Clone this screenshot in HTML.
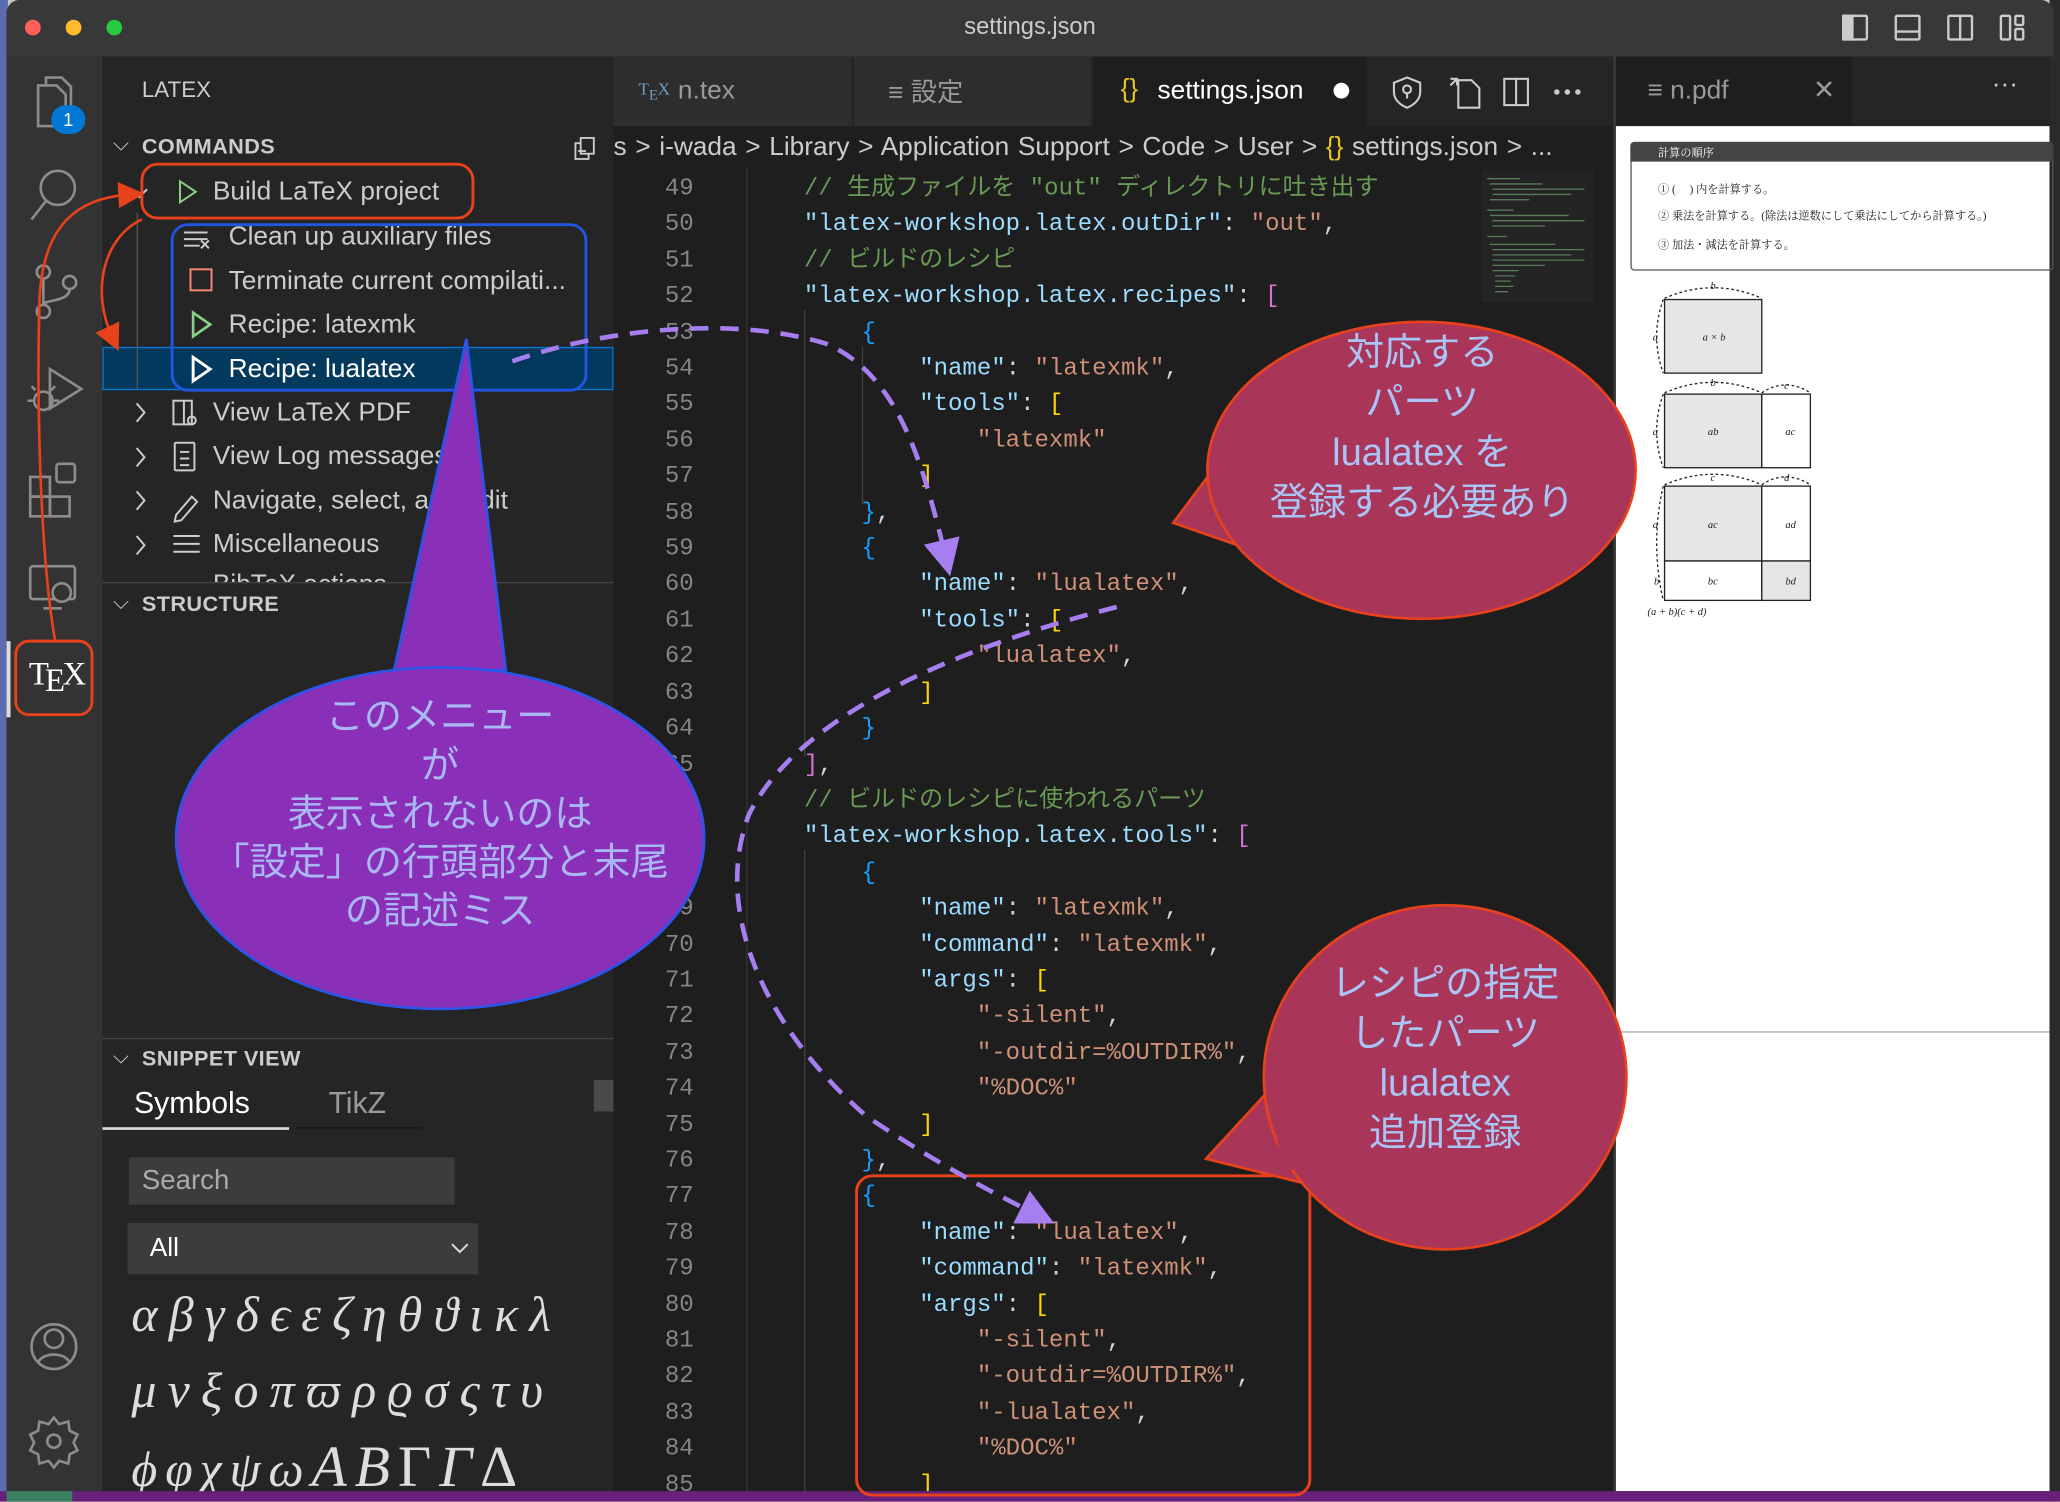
<!DOCTYPE html>
<html><head><meta charset="utf-8">
<style>
html,body{margin:0;padding:0;width:2060px;height:1502px;overflow:hidden;background:#c9c4b8;}
#w{position:absolute;left:0;top:0;width:1568px;height:1143px;transform:scale(1.31378);transform-origin:0 0;font-family:"Liberation Sans","Noto Sans CJK JP",sans-serif;color:#ccc;overflow:hidden;}
.a{position:absolute;}
.mono{font-family:"Liberation Mono","Noto Sans CJK JP",monospace;font-size:18.3px;white-space:pre;}
.ln{position:absolute;left:470px;width:58px;text-align:right;color:#858585;}
.cl{position:absolute;left:568px;top:0;}
.s{color:#ce9178}.k{color:#9cdcfe}.c{color:#6a9955}.y{color:#ffd700}.p{color:#da70d6}.b{color:#179fff}.w{color:#d4d4d4}
.it{position:absolute;font-size:20px;color:#ccc;white-space:nowrap;}
.hd{position:absolute;font-size:16.5px;font-weight:bold;color:#ccc;letter-spacing:.3px}
.gr{position:absolute;font-family:"Liberation Serif","DejaVu Serif",serif;font-style:italic;font-size:38px;color:#ddd;white-space:nowrap;letter-spacing:8.5px}
.pt{position:absolute;font-family:"Liberation Serif","Noto Serif CJK SC",serif;font-size:8.5px;color:#222;white-space:nowrap}
</style></head><body>
<div id="w">
<div class="a" style="left:0;top:0;width:6px;height:1143px;background:#5b6cb0"></div>
<div class="a" style="left:5px;top:0;width:1558px;height:1143px;background:#1e1e1e;border-radius:10px 10px 0 0"></div>
<div class="a" style="left:1560px;top:0;width:8px;height:1143px;background:#2a2a2a"></div>
<div class="a" style="left:5px;top:0;width:1558px;height:43px;background:#383838;border-radius:10px 10px 0 0"></div>
<div class="a" style="left:19px;top:15px;width:12px;height:12px;border-radius:6px;background:#fe5f57"></div>
<div class="a" style="left:50px;top:15px;width:12px;height:12px;border-radius:6px;background:#febc2e"></div>
<div class="a" style="left:81px;top:15px;width:12px;height:12px;border-radius:6px;background:#28c840"></div>
<div class="a" style="left:684px;top:10px;width:200px;text-align:center;font-size:18px;color:#ccc">settings.json</div>
<svg class="a" style="left:1398px;top:9px" width="150" height="24" fill="none" stroke="#ccc" stroke-width="1.8">
<rect x="5" y="3" width="18" height="18" rx="1"/><rect x="5" y="3" width="7" height="18" fill="#ccc"/>
<rect x="45" y="3" width="18" height="18" rx="1"/><line x1="45" y1="15" x2="63" y2="15"/>
<rect x="85" y="3" width="18" height="18" rx="1"/><line x1="94" y1="3" x2="94" y2="21"/>
<rect x="125" y="3" width="7" height="18" rx="1"/><rect x="136" y="3" width="6" height="7" rx="1"/><rect x="136" y="13" width="6" height="8" rx="1"/>
</svg>
<div class="a" style="left:5px;top:43px;width:73px;height:1092px;background:#333333"></div>
<svg class="a" style="left:5px;top:43px" width="73" height="1092" fill="none" stroke="#8c8c8c" stroke-width="2">
<path d="M24 22h14l7 7v24H24z M30 22v-6h12l7 7v24h-4"/>
<circle cx="39" cy="100" r="13"/><path d="M30 110l-11 14"/>
<circle cx="28" cy="164" r="5"/><circle cx="28" cy="194" r="5"/><circle cx="48" cy="172" r="5"/><path d="M28 169v20 M48 177c0 10-20 8-20 12"/>
<path d="M33 238l24 15-24 15z"/><circle cx="28" cy="262" r="7"/><path d="M20 262h-4 M36 262h4 M22 254l-3-3 M34 254l3-3"/>
<rect x="18" y="320" width="15" height="15"/><rect x="18" y="335" width="15" height="15"/><rect x="33" y="335" width="15" height="15"/><rect x="38" y="310" width="14" height="14" rx="2"/>
<rect x="18" y="388" width="34" height="25" rx="2"/><path d="M28 420h14"/><circle cx="42" cy="408" r="7" fill="#333"/>
<circle cx="36" cy="982" r="17"/><circle cx="36" cy="976" r="7"/><path d="M24 994c4-8 20-8 24 0"/>
<circle cx="36" cy="1054" r="5"/><path d="M36 1036l4 5 7-2 1 7 6 3-3 6 3 6-6 3-1 7-7-2-4 5-4-5-7 2-1-7-6-3 3-6-3-6 6-3 1-7 7 2z"/>
</svg>
<div class="a" style="left:39px;top:80px;width:26px;height:22px;border-radius:11px;background:#0078d4;color:#fff;font-size:14px;text-align:center;line-height:22px">1</div>
<div class="a" style="left:5px;top:488px;width:3px;height:58px;background:#ddd"></div>
<div class="a" style="left:22px;top:500px;font-family:'Liberation Serif',serif;font-size:25px;color:#fff">T<span style="position:relative;top:5px;left:-3px">E</span><span style="margin-left:-5px">X</span></div>
<div class="a" style="left:78px;top:43px;width:389px;height:1092px;background:#252526"></div>
<div class="a" style="left:108px;top:59px;font-size:17px;color:#ccc">LATEX</div>
<div class="a" style="left:86px;top:101px;font-size:16px;color:#ccc">⌵</div>
<div class="hd" style="left:108px;top:103px">COMMANDS</div>
<svg class="a" style="left:436px;top:103px" width="20" height="20" fill="none" stroke="#ccc" stroke-width="1.4"><rect x="2" y="6" width="10" height="12"/><rect x="6" y="2" width="10" height="12" fill="#252526"/><line x1="4" y1="12" x2="10" y2="12"/></svg>
<div class="a" style="left:78px;top:264px;width:387px;height:31px;background:#04395e;border:1px solid #0078d4"></div>
<div class="a" style="left:104px;top:162px;width:1px;height:134px;background:#555"></div>
<svg class="a" style="left:90px;top:130px" width="80" height="310" fill="none" stroke="#ccc" stroke-width="1.5">
<path d="M10 14l6 6 6-6"/>
<path d="M47 8l12 8-12 8z" stroke="#89d185"/>
<path d="M50 47h18 M50 52h18 M50 57h12" stroke="#ccc"/><path d="M63 53l6 6 M69 53l-6 6"/>
<rect x="55" y="75" width="16" height="16" stroke="#f48771"/>
<path d="M57 108l13 9-13 9z" stroke="#89d185" stroke-width="2"/>
<path d="M57 142l13 9-13 9z" stroke="#fff" stroke-width="2.2"/>
<path d="M14 177l6 7-6 7 M14 211l6 7-6 7 M14 244l6 7-6 7 M14 278l6 7-6 7"/>
<rect x="42" y="175" width="14" height="18"/><path d="M50 175v18"/><circle cx="56" cy="190" r="3"/>
<rect x="43" y="207" width="15" height="21" rx="1"/><path d="M47 214h7 M47 219h7 M47 224h7"/>
<path d="M44 262l12-14 4 4-12 14-5 1z"/>
<path d="M42 278h20 M42 284h20 M42 290h20"/>
</svg>
<div class="it" style="left:162px;top:135px">Build LaTeX project</div>
<div class="it" style="left:174px;top:169px">Clean up auxiliary files</div>
<div class="it" style="left:174px;top:203px">Terminate current compilati...</div>
<div class="it" style="left:174px;top:236px">Recipe: latexmk</div>
<div class="it" style="left:174px;top:270px;color:#fff">Recipe: lualatex</div>
<div class="it" style="left:162px;top:303px">View LaTeX PDF</div>
<div class="it" style="left:162px;top:336px">View Log messages</div>
<div class="it" style="left:162px;top:370px">Navigate, select, and edit</div>
<div class="it" style="left:162px;top:403px">Miscellaneous</div>
<div class="a" style="left:78px;top:436px;width:389px;height:7px;overflow:hidden"><div class="it" style="left:84px;top:-2px">BibTeX actions</div></div>
<div class="a" style="left:78px;top:443px;width:389px;height:1px;background:#444"></div>
<div class="a" style="left:86px;top:450px;font-size:16px;color:#ccc">⌵</div>
<div class="hd" style="left:108px;top:451px">STRUCTURE</div>
<div class="a" style="left:78px;top:790px;width:389px;height:1px;background:#444"></div>
<div class="a" style="left:86px;top:796px;font-size:16px;color:#ccc">⌵</div>
<div class="hd" style="left:108px;top:797px">SNIPPET VIEW</div>
<div class="a" style="left:452px;top:822px;width:15px;height:24px;background:#4a4a4a"></div>
<div class="a" style="left:102px;top:826px;font-size:23px;color:#fff">Symbols</div>
<div class="a" style="left:250px;top:826px;font-size:23px;color:#999">TikZ</div>
<div class="a" style="left:78px;top:858px;width:142px;height:2px;background:#ddd"></div>
<div class="a" style="left:226px;top:858px;width:95px;height:1px;background:#151515"></div>
<div class="a" style="left:98px;top:881px;width:248px;height:36px;background:#3c3c3c;font-size:21px;color:#aaa;line-height:36px;box-sizing:border-box;padding-left:10px">Search</div>
<div class="a" style="left:97px;top:931px;width:267px;height:39px;background:#3c3c3c;font-size:20px;color:#fff;line-height:39px;box-sizing:border-box;padding-left:17px">All</div>
<svg class="a" style="left:342px;top:944px" width="16" height="12" fill="none" stroke="#ddd" stroke-width="1.5"><path d="M2 3l6 6 6-6"/></svg>
<div class="gr" style="left:100px;top:979px">αβγδϵεζηθϑικλ</div>
<div class="gr" style="left:100px;top:1037px">μνξoπϖρϱσςτυ</div>
<div class="gr" style="left:100px;top:1091px;letter-spacing:6px">ϕφχψω<span style="font-size:44px">AB</span><span style="font-style:normal;font-size:44px">Γ</span><span style="font-size:44px">Γ</span><span style="font-style:normal;font-size:44px">Δ</span></div>
<div class="a" style="left:467px;top:43px;width:763px;height:53px;background:#252526"></div>
<div class="a" style="left:467px;top:43px;width:181px;height:53px;background:#2d2d2d"></div>
<div class="a" style="left:650px;top:43px;width:180px;height:53px;background:#2d2d2d"></div>
<div class="a" style="left:832px;top:43px;width:208px;height:53px;background:#1e1e1e"></div>
<div class="a" style="left:486px;top:60px;font-family:'Liberation Serif',serif;font-size:13px;color:#6e9fc8">T<sub style="font-size:11px">E</sub>X</div>
<div class="a" style="left:516px;top:58px;font-size:20px;color:#999">n.tex</div>
<div class="a" style="left:676px;top:54px;font-size:20px;color:#999">≡ 設定</div>
<div class="a" style="left:853px;top:57px;font-size:20px;color:#e8c620">{}</div>
<div class="a" style="left:881px;top:58px;font-size:20px;color:#fff">settings.json</div>
<div class="a" style="left:1015px;top:63px;width:12px;height:12px;border-radius:6px;background:#fff"></div>
<svg class="a" style="left:1055px;top:55px" width="160" height="30" fill="none" stroke="#ccc" stroke-width="1.6">
<path d="M16 4l10 4v7c0 6-5 10-10 12-5-2-10-6-10-12V8z"/><circle cx="16" cy="13" r="3"/><path d="M16 16v4"/>
<path d="M55 6h10l6 6v15H55z M49 10l5-5 M49 5h5v5"/>
<rect x="90" y="5" width="18" height="20"/><path d="M99 5v20"/>
<circle cx="130" cy="15" r="1.3" fill="#ccc"/><circle cx="138" cy="15" r="1.3" fill="#ccc"/><circle cx="146" cy="15" r="1.3" fill="#ccc"/>
</svg>
<div class="a" style="left:1228px;top:43px;width:2px;height:1092px;background:#3a3a3a"></div>
<div class="a" style="left:1230px;top:43px;width:330px;height:53px;background:#252526"></div>
<div class="a" style="left:1230px;top:43px;width:180px;height:53px;background:#1e1e1e"></div>
<div class="a" style="left:1254px;top:58px;font-size:20px;color:#999">≡ n.pdf</div>
<div class="a" style="left:1380px;top:56px;font-size:20px;color:#999">✕</div>
<div class="a" style="left:1516px;top:53px;font-size:20px;color:#ccc">···</div>
<div class="a" style="left:467px;top:101px;font-size:20px;color:#ccc;white-space:nowrap;word-spacing:1px">s &gt; i-wada &gt; Library &gt; Application Support &gt; Code &gt; User &gt; <span style="color:#e8c620">{}</span> settings.json &gt; ...</div>
<div class="a" style="left:1128px;top:130px;width:85px;height:100px;background:#252526;opacity:.8"></div>
<svg class="a" style="left:1130px;top:134px" width="80" height="100" stroke="#5a7a5a" stroke-width="1">
<path d="M2 2h25 M4 6h40 M6 10h70 M6 14h60 M4 18h30 M2 26h20 M4 30h60 M6 34h70 M6 38h40 M2 46h15 M4 52h50 M6 56h70 M6 60h60 M6 64h70 M6 68h40 M6 72h20 M8 76h15 M8 80h12 M8 84h14 M8 88h10"/>
</svg>
<div class="a" style="left:568px;top:128px;width:1px;height:1010px;background:#333"></div>
<div class="a" style="left:612px;top:236px;width:1px;height:340px;background:#404040"></div>
<div class="a" style="left:612px;top:647px;width:1px;height:490px;background:#404040"></div>
<div class="a" style="left:656px;top:264px;width:1px;height:120px;background:#404040"></div>
<div class="a mono" style="left:0;top:131px;line-height:27.4px;width:1130px;height:1004px;overflow:hidden"><div class="ln" style="top:0;line-height:27.4px">49
50
51
52
53
54
55
56
57
58
59
60
61
62
63
64
65
66
67
68
69
70
71
72
73
74
75
76
77
78
79
80
81
82
83
84
85</div><div class="cl">    <span class="c">// 生成ファイルを "out" ディレクトリに吐き出す</span>
    <span class="k">"latex-workshop.latex.outDir"</span><span class="w">: </span><span class="s">"out"</span><span class="w">,</span>
    <span class="c">// ビルドのレシピ</span>
    <span class="k">"latex-workshop.latex.recipes"</span><span class="w">: </span><span class="p">[</span>
        <span class="b">{</span>
            <span class="k">"name"</span><span class="w">: </span><span class="s">"latexmk"</span><span class="w">,</span>
            <span class="k">"tools"</span><span class="w">: </span><span class="y">[</span>
                <span class="s">"latexmk"</span>
            <span class="y">]</span>
        <span class="b">}</span><span class="w">,</span>
        <span class="b">{</span>
            <span class="k">"name"</span><span class="w">: </span><span class="s">"lualatex"</span><span class="w">,</span>
            <span class="k">"tools"</span><span class="w">: </span><span class="y">[</span>
                <span class="s">"lualatex"</span><span class="w">,</span>
            <span class="y">]</span>
        <span class="b">}</span>
    <span class="p">]</span><span class="w">,</span>
    <span class="c">// ビルドのレシピに使われるパーツ</span>
    <span class="k">"latex-workshop.latex.tools"</span><span class="w">: </span><span class="p">[</span>
        <span class="b">{</span>
            <span class="k">"name"</span><span class="w">: </span><span class="s">"latexmk"</span><span class="w">,</span>
            <span class="k">"command"</span><span class="w">: </span><span class="s">"latexmk"</span><span class="w">,</span>
            <span class="k">"args"</span><span class="w">: </span><span class="y">[</span>
                <span class="s">"-silent"</span><span class="w">,</span>
                <span class="s">"-outdir=%OUTDIR%"</span><span class="w">,</span>
                <span class="s">"%DOC%"</span>
            <span class="y">]</span>
        <span class="b">}</span><span class="w">,</span>
        <span class="b">{</span>
            <span class="k">"name"</span><span class="w">: </span><span class="s">"lualatex"</span><span class="w">,</span>
            <span class="k">"command"</span><span class="w">: </span><span class="s">"latexmk"</span><span class="w">,</span>
            <span class="k">"args"</span><span class="w">: </span><span class="y">[</span>
                <span class="s">"-silent"</span><span class="w">,</span>
                <span class="s">"-outdir=%OUTDIR%"</span><span class="w">,</span>
                <span class="s">"-lualatex"</span><span class="w">,</span>
                <span class="s">"%DOC%"</span>
            <span class="y">]</span></div></div>
<div class="a" style="left:1230px;top:96px;width:330px;height:1039px;background:#fff"></div>
<div class="a" style="left:1230px;top:785px;width:330px;height:1px;background:#aaa"></div>
<div class="a" style="left:1241px;top:108px;width:322px;height:98px;border:1.5px solid #555;border-radius:3px;box-sizing:border-box"></div>
<div class="a" style="left:1241px;top:108px;width:322px;height:15px;background:#444;border-radius:3px 3px 0 0"></div>
<div class="pt" style="left:1262px;top:110px;color:#fff">計算の順序</div>
<div class="pt" style="left:1262px;top:138px">① (　 ) 内を計算する。</div>
<div class="pt" style="left:1262px;top:158px">② 乗法を計算する。(除法は逆数にして乗法にしてから計算する。)</div>
<div class="pt" style="left:1262px;top:180px">③ 加法・減法を計算する。</div>
<svg class="a" style="left:1230px;top:200px" width="330" height="280" font-family="Liberation Serif,serif" font-style="italic" font-size="8" fill="#222">
<g stroke="#222" stroke-width="1">
<rect x="37" y="28" width="74" height="56" fill="#e6e6e6"/>
<rect x="37" y="100" width="74" height="56" fill="#e6e6e6"/><rect x="111" y="100" width="37" height="56" fill="#fff"/>
<rect x="37" y="170" width="74" height="57" fill="#e6e6e6"/><rect x="111" y="170" width="37" height="57" fill="#fff"/>
<rect x="37" y="227" width="74" height="30" fill="#fff"/><rect x="111" y="227" width="37" height="30" fill="#e6e6e6"/>
<g fill="none" stroke-dasharray="2 2">
<path d="M37 27q37-16 74 0 M37 99q37-16 74 0 M111 99q18-12 37 0 M37 169q37-16 74 0 M111 169q18-12 37 0 M36 28q-10 28 0 56 M36 100q-10 28 0 56 M36 170q-10 43 0 87"/>
</g>
</g>
<text x="66" y="59">a × b</text><text x="28" y="59">a</text><text x="72" y="20">b</text>
<text x="70" y="131">ab</text><text x="129" y="131">ac</text><text x="28" y="131">a</text><text x="72" y="94">b</text><text x="128" y="96">c</text>
<text x="70" y="202">ac</text><text x="129" y="202">ad</text><text x="70" y="245">bc</text><text x="129" y="245">bd</text><text x="28" y="202">a</text><text x="29" y="245">b</text><text x="72" y="166">c</text><text x="128" y="166">d</text>
<text x="24" y="268">(a + b)(c + d)</text>
</svg>
<div class="a" style="left:0;top:1135px;width:1568px;height:8px;background:#68217a"></div>
<div class="a" style="left:5px;top:1135px;width:50px;height:8px;background:#3c8063"></div>
<svg class="a" style="left:0;top:0" width="1568" height="1143" fill="none">
<defs>
<marker id="ao" markerWidth="10" markerHeight="10" refX="5" refY="5" orient="auto"><path d="M0 0L10 5L0 10z" fill="#e8421c"/></marker>
<marker id="ap" markerWidth="8" markerHeight="8" refX="4" refY="4" orient="auto"><path d="M0 0L8 4L0 8z" fill="#a77ef0"/></marker>
</defs>
<rect x="108" y="125" width="252" height="41" rx="12" stroke="#e8421c" stroke-width="2.2"/>
<rect x="131" y="171" width="315" height="126" rx="12" stroke="#2255e0" stroke-width="2.2"/>
<rect x="652" y="895" width="345" height="243" rx="12" stroke="#e8421c" stroke-width="2.2"/>
<rect x="12" y="488" width="58" height="56" rx="10" stroke="#e8421c" stroke-width="2.2"/>
<path d="M42 488C30 420 28 300 30 230C32 170 60 150 100 148" stroke="#e8421c" stroke-width="2" marker-end="url(#ao)"/>
<path d="M108 167C80 180 68 220 86 258" stroke="#e8421c" stroke-width="2" marker-end="url(#ao)"/>
<path d="M390 275C460 250 560 240 630 262C680 285 700 340 720 425" stroke="#a77ef0" stroke-width="3.5" stroke-dasharray="14 9" marker-end="url(#ap)"/>
<path d="M850 462C740 490 610 540 570 620C540 700 590 790 660 850C720 890 760 910 790 925" stroke="#a77ef0" stroke-width="3.5" stroke-dasharray="14 9" marker-end="url(#ap)"/>
<path d="M300 510L355 258L385 510Z" fill="#8a2fb8" stroke="#2a55e8" stroke-width="2"/>
<ellipse cx="335" cy="638" rx="201" ry="130" fill="#8a2fb8" stroke="#2a55e8" stroke-width="2"/>
<path d="M302 516L384 516" stroke="#8a2fb8" stroke-width="8"/>
<path d="M940 335L893 398L985 430Z" fill="#a93659" stroke="#e8421c" stroke-width="2"/>
<ellipse cx="1082" cy="358" rx="163" ry="113" fill="#a93659" stroke="#e8421c" stroke-width="2"/>
<path d="M944 345L978 420" stroke="#a93659" stroke-width="14"/>
<path d="M975 820L918 882L990 900Z" fill="#a93659" stroke="#e8421c" stroke-width="2"/>
<ellipse cx="1100" cy="820" rx="138" ry="131" fill="#a93659" stroke="#e8421c" stroke-width="2"/>
<path d="M972 832L984 890" stroke="#a93659" stroke-width="14"/>
</svg>
<div class="a" style="left:135px;top:528px;width:400px;text-align:center;font-size:29px;line-height:37px;color:#a9b8f5">このメニュー<br>が<br>表示されないのは<br>「設定」の行頭部分と末尾<br>の記述ミス</div>
<div class="a" style="left:920px;top:250px;width:325px;text-align:center;font-size:29px;line-height:38px;color:#a9c4f5">対応する<br>パーツ<br>lualatex を<br>登録する必要あり</div>
<div class="a" style="left:962px;top:730px;width:276px;text-align:center;font-size:29px;line-height:38px;color:#a9c4f5">レシピの指定<br>したパーツ<br>lualatex<br>追加登録</div>
</div>
</body></html>
